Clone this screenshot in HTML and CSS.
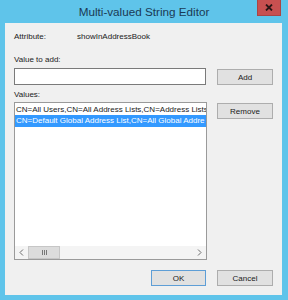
FILE: index.html
```html
<!DOCTYPE html>
<html>
<head>
<meta charset="utf-8">
<link rel="stylesheet" href="styles.css">
</head>
<body>
<div class="window">
  <div class="titlebar">
    <span></span>
    <span class="title">Multi-valued String Editor</span>
    <div class="close">
      <svg width="8" height="7" viewBox="0 0 8 7"><path d="M1 0.5 L7 6.5 M7 0.5 L1 6.5" stroke="#2b1616" stroke-width="1.8"/></svg>
    </div>
  </div>
  <div class="client">
    <div class="attr"><span class="attr-label">Attribute:</span><span>showInAddressBook</span></div>
    <div class="label lbl-add">Value to add:</div>
    <div class="row row-add">
      <div class="input"></div>
      <div class="btn">Add</div>
    </div>
    <div class="label lbl-values">Values:</div>
    <div class="row row-list">
      <div class="list">
        <div class="items">
          <div class="item"><span>CN=All Users,CN=All Address Lists,CN=Address Lists</span></div>
          <div class="item sel"><span>CN=Default Global Address List,CN=All Global Addre</span></div>
        </div>
        <div class="hscroll">
          <div class="arrow"><svg width="5" height="7" viewBox="0 0 5 7"><path d="M4 0.5 L1 3.5 L4 6.5" fill="none" stroke="#6d6d6d" stroke-width="1"/></svg></div>
          <div class="thumb"><svg width="7" height="5" viewBox="0 0 7 5"><path d="M1.5 0 V5 M3.5 0 V5 M5.5 0 V5" stroke="#777" stroke-width="1"/></svg></div>
          <div class="track"></div>
          <div class="arrow"><svg width="5" height="7" viewBox="0 0 5 7"><path d="M1 0.5 L4 3.5 L1 6.5" fill="none" stroke="#6d6d6d" stroke-width="1"/></svg></div>
        </div>
      </div>
      <div class="btn">Remove</div>
    </div>
    <div class="footer">
      <div class="btn ok">OK</div>
      <div class="btn cancel">Cancel</div>
    </div>
  </div>
</div>
</body>
</html>
```
FILE: styles.css
```css
html, body {
  margin: 0;
  padding: 0;
}
body {
  width: 288px;
  height: 300px;
  overflow: hidden;
  background: #5fc4ea;
  font-family: "Liberation Sans", Arial, sans-serif;
}
.window {
  display: flex;
  flex-direction: column;
  height: 300px;
}
.titlebar {
  height: 23px;
  display: grid;
  grid-template-columns: 1fr auto 1fr;
  align-items: start;
}
.title {
  font-size: 11.7px;
  line-height: 23px;
  color: #1b3a55;
  white-space: nowrap;
}
.close {
  justify-self: end;
  margin-right: 7px;
  width: 24px;
  height: 16px;
  box-sizing: border-box;
  background: #c75050;
  border: 1px solid #a94545;
  border-top: 0;
  display: flex;
  align-items: center;
  justify-content: center;
}
.client {
  background: #f0f0f0;
  margin: 0 6px 0 5px;
  height: 272px;
  box-sizing: border-box;
  padding: 9px 9px 0 9px;
  font-size: 8px;
  color: #1a1a1a;
}
.attr {
  display: flex;
  line-height: 10px;
  height: 10px;
}
.attr-label {
  width: 63px;
}
.label {
  line-height: 10px;
  height: 10px;
}
.lbl-add {
  margin-top: 13px;
}
.row {
  display: grid;
  grid-template-columns: 193px 56px;
  column-gap: 10px;
  align-items: start;
}
.row-add {
  margin-top: 3px;
}
.input {
  width: 192px;
  height: 17px;
  box-sizing: border-box;
  border: 1px solid #7a7a7a;
  background: #fff;
}
.btn {
  height: 16px;
  box-sizing: border-box;
  border: 1px solid #adadad;
  background: #e1e1e1;
  display: flex;
  align-items: center;
  justify-content: center;
  font-size: 8px;
  color: #1a1a1a;
}
.row-add .btn,
.row-list .btn {
  margin-top: 1px;
}
.lbl-values {
  margin-top: 5px;
}
.row-list {
  margin-top: 2px;
}
.list {
  width: 193px;
  height: 158px;
  box-sizing: border-box;
  border: 1px solid #9a9a9a;
  background: #fff;
  display: flex;
  flex-direction: column;
}
.items {
  flex: 1;
  overflow: hidden;
  padding-top: 1px;
}
.item {
  height: 11px;
  line-height: 11px;
  white-space: nowrap;
  overflow: hidden;
  padding-left: 1px;
  color: #1a1a1a;
}
.item.sel {
  height: 12px;
  line-height: 12px;
  background: #3399ff;
  color: #fff;
}
.hscroll {
  height: 13px;
  display: flex;
  background: #f4f4f4;
}
.arrow {
  width: 13px;
  display: flex;
  align-items: center;
  justify-content: center;
}
.thumb {
  width: 32px;
  box-sizing: border-box;
  background: #dcdcdc;
  border: 1px solid #c6c6c6;
  display: flex;
  align-items: center;
  justify-content: center;
}
.track {
  flex: 1;
}
.footer {
  margin-top: 10px;
  display: flex;
  justify-content: flex-end;
  gap: 11px;
}
.ok {
  width: 55px;
  border-color: #5e9ed6;
}
.cancel {
  width: 56px;
}
```
